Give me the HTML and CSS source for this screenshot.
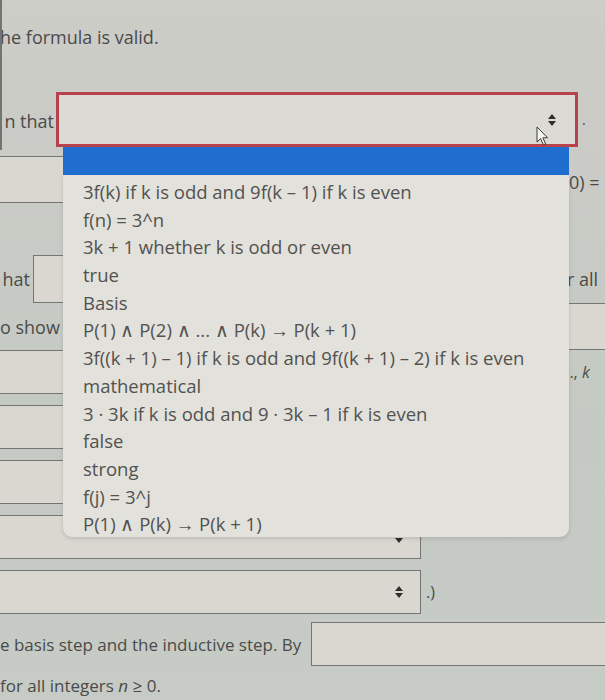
FILE: index.html
```html
<!DOCTYPE html>
<html>
<head>
<meta charset="utf-8">
<link rel="stylesheet" href="styles.css">
</head>
<body>
<div class="page">
  <div class="edge"></div>
  <p class="intro">he formula is valid.</p>

  <div class="row row-b">
    <span class="label">n that</span>
    <div class="select select-red">
      <svg class="arrows" width="8" height="14" viewBox="0 0 8 14"><path d="M0 6 L4 1 L8 6 Z M0 8 L4 13 L8 8 Z"/></svg>
    </div>
    <span class="dot">.</span>
  </div>

  <div class="row row-c">
    <div class="box box-c"></div>
    <span class="side">0) =</span>
  </div>

  <div class="row row-d">
    <span class="label">hat</span>
    <div class="box box-d"></div>
    <span class="side">r all</span>
  </div>

  <div class="row row-e">
    <span class="label">o show th</span>
    <div class="box box-e"></div>
  </div>

  <div class="stack">
    <div class="row row-f">
      <div class="box box-f"></div>
      <span class="side side-k">..., <i>k</i></span>
    </div>
    <div class="row row-f"><div class="box box-f"></div></div>
    <div class="row row-f"><div class="box box-f"></div></div>
    <div class="row row-f">
      <div class="box box-f box-sel">
        <svg class="arrows" width="8" height="14" viewBox="0 0 8 14"><path d="M0 6 L4 1 L8 6 Z M0 8 L4 13 L8 8 Z"/></svg>
      </div>
    </div>
    <div class="row row-f">
      <div class="box box-f box-sel">
        <svg class="arrows" width="8" height="14" viewBox="0 0 8 14"><path d="M0 6 L4 1 L8 6 Z M0 8 L4 13 L8 8 Z"/></svg>
      </div>
      <span class="paren">.)</span>
    </div>
  </div>

  <div class="row row-g">
    <span class="label">e basis step and the inductive step. By</span>
    <div class="box box-g"></div>
  </div>

  <p class="outro">for all integers <i>n</i> ≥ 0.</p>

  <div class="dropdown">
    <div class="dd-head"></div>
    <ul class="dd-list">
      <li>3f(k) if k is odd and 9f(k – 1) if k is even</li>
      <li>f(n) = 3^n</li>
      <li>3k + 1 whether k is odd or even</li>
      <li>true</li>
      <li>Basis</li>
      <li>P(1) ∧ P(2) ∧ ... ∧ P(k) → P(k + 1)</li>
      <li>3f((k + 1) – 1) if k is odd and 9f((k + 1) – 2) if k is even</li>
      <li>mathematical</li>
      <li>3 · 3k if k is odd and 9 · 3k – 1 if k is even</li>
      <li>false</li>
      <li>strong</li>
      <li>f(j) = 3^j</li>
      <li>P(1) ∧ P(k) → P(k + 1)</li>
    </ul>
  </div>

  <svg class="cursor" width="13" height="20" viewBox="0 0 13 20"><path d="M1 1 L1 16 L4.6 12.6 L7.4 18.8 L9.6 17.8 L6.9 11.8 L11.6 11.8 Z" fill="#f4f4f2" stroke="#3a3a3a" stroke-width="1" stroke-linejoin="round"/></svg>
</div>
</body>
</html>
```

FILE: styles.css
```css
* { box-sizing: border-box; }
html, body { margin: 0; padding: 0; }
body {
  width: 605px;
  height: 700px;
  overflow: hidden;
  font-family: "Open Sans", "Noto Sans", sans-serif;
  font-size: 16px;
  color: #4a4a4a;
  background: linear-gradient(180deg, #cdcdc8 0%, #cacbc6 25%, #c4cac3 60%, #c6ccc5 100%);
}
.page {
  position: relative;
  width: 605px;
  height: 700px;
  overflow: hidden;
}
.edge {
  position: absolute;
  left: 0; top: 0;
  width: 2px; height: 150px;
  background: #74746f;
}
.intro {
  margin: 0;
  height: 92px;
  padding-top: 26px;
  line-height: 22px;
  font-size: 18px;
}
.row {
  display: flex;
  align-items: center;
  white-space: nowrap;
}
.label { flex: none; }
.row-b { height: 55px; margin-bottom: 9px; font-size: 18px; }
.row-b .label { width: 56px; text-align: right; padding-right: 2px; padding-top: 3px; }
.select {
  position: relative;
  display: flex;
  align-items: center;
  justify-content: flex-end;
  flex: none;
}
.select-red {
  width: 522px;
  height: 55px;
  border: 3px solid #b7424c;
  background: #dcdad4;
  padding-right: 19px;
}
.arrows { fill: #2e2e2e; display: block; }
.dot { margin-left: 4px; font-size: 14px; }

.box {
  flex: none;
  background: #d9d7d0;
  border: 1px solid #747673;
}
.side { margin-left: 9px; font-size: 18px; }

.row-c { height: 47px; margin-bottom: 52px; }
.box-c { width: 562px; height: 47px; margin-left: -2px; }
.row-c .side { align-self: flex-start; padding-top: 14px; }

.row-d { height: 48px; font-size: 18px; }
.row-d .label { width: 33px; text-align: right; padding-right: 3px; }
.box-d { width: 522px; height: 48px; }
.row-d .side { margin-left: 12px; }

.row-e { height: 47px; font-size: 18px; }
.row-e .label { width: 565px; }
.box-e { width: 60px; height: 47px; border-right: none; }

.stack { display: flex; flex-direction: column; gap: 11px; margin-bottom: 8px; }
.row-f { height: 44px; }
.box-f { width: 423px; height: 44px; margin-left: -2px; }
.box-sel {
  display: flex;
  align-items: center;
  justify-content: flex-end;
  padding-right: 17px;
}
.side-k {
  margin-left: 140px;
  font-size: 16px;
}
.paren { margin-left: 5px; font-size: 16px; }

.row-g { height: 44px; font-size: 17px; }
.row-g .label { width: 311px; }
.box-g { width: 300px; height: 44px; border-right: none; }

.outro {
  margin: 9px 0 0;
  line-height: 22px;
  font-size: 17px;
}

.dropdown {
  position: absolute;
  left: 63px;
  top: 147px;
  width: 506px;
}
.dd-head {
  height: 28px;
  background: #1e6dcf;
}
.dd-list {
  list-style: none;
  margin: 0;
  padding: 3px 0 0 20px;
  height: 362px;
  background: #e3e1db;
  border-radius: 0 0 9px 9px;
  box-shadow: 0 2px 4px rgba(0,0,0,0.12);
  color: #525250;
  font-size: 18.5px;
}
.dd-list li {
  height: 27.7px;
  line-height: 27.7px;
  white-space: nowrap;
}
.cursor {
  position: absolute;
  left: 536px;
  top: 126px;
}
```
